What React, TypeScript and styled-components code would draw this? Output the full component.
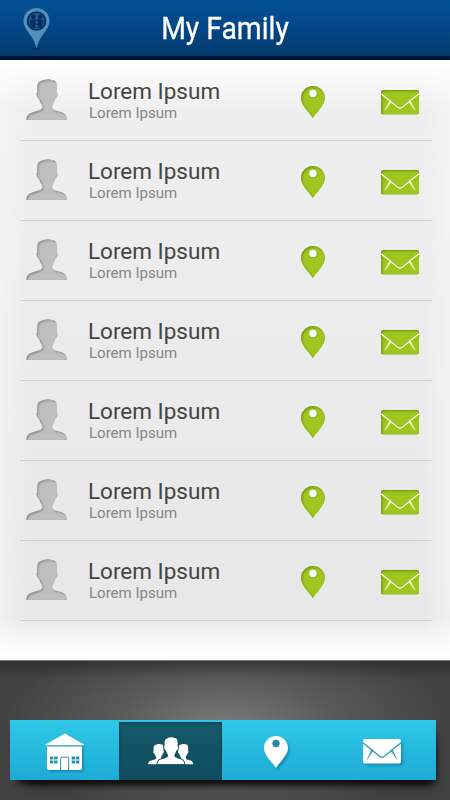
import React from "react";
import styled, { createGlobalStyle, css } from "styled-components";

const GlobalStyle = createGlobalStyle`
  *, *::before, *::after { box-sizing: border-box; }
  body { margin: 0; font-family: Roboto, "Noto Sans", sans-serif; }
`;

const Screen = styled.div`
  width: 450px;
  height: 800px;
  display: flex;
  flex-direction: column;
  overflow: hidden;
  background: #444;
`;

const Header = styled.header`
  height: 60px;
  flex: none;
  display: grid;
  grid-template-columns: 72px 306px 72px;
  border-bottom: 4px solid #001532;
  background: linear-gradient(#045095, #034888 45%, #063a70);
`;

const LogoSlot = styled.div`
  display: flex;
  justify-content: center;
  padding-top: 7px;
`;

const Title = styled.h1`
  margin: 0;
  font-size: 32px;
  line-height: 56px;
  font-weight: 400;
  color: #fff;
  text-align: center;
  white-space: nowrap;
  -webkit-text-stroke: 0.3px #fff;
  transform: scaleX(0.885);
`;

const List = styled.main`
  height: 600px;
  flex: none;
  padding: 0 18px 0 20px;
  background:
    linear-gradient(#fff, rgba(255, 255, 255, 0) 50px, rgba(255, 255, 255, 0) 556px, #fff 594px),
    linear-gradient(90deg, rgba(255, 255, 255, 0.35), rgba(255, 255, 255, 0) 30px, rgba(255, 255, 255, 0) 420px, rgba(255, 255, 255, 0.35)),
    linear-gradient(#efefef, #e7e7e7);
`;

const Row = styled.section`
  height: 80px;
  display: grid;
  grid-template-columns: 68px 193px 100px 1fr;
  align-items: start;
  &:not(:first-child) { border-top: 1px solid #cecece; }
  &:first-child { height: 80px; padding-top: 1px; }
  &:last-child { height: 81px; border-bottom: 1px solid #cecece; }
`;

const Avatar = styled.div`
  padding: 18px 0 0 6px;
`;

const Names = styled.div`
  padding-top: 16px;
`;

const Name = styled.div`
  font-size: 22.5px;
  line-height: 28px;
  color: #444;
  white-space: nowrap;
`;

const Detail = styled.div`
  font-size: 15px;
  line-height: 18px;
  color: #858585;
  padding-left: 1px;
  margin-top: -1px;
`;

const Action = styled.div<{ $top: number; $left?: number }>`
  padding-top: ${(p) => p.$top}px;
  padding-left: ${(p) => p.$left ?? 0}px;
`;

const Footer = styled.footer`
  height: 140px;
  flex: none;
  padding: 59px 14px 0 10px;
  border-top: 1px solid #777;
  background:
    linear-gradient(rgba(20, 20, 20, 0.4), rgba(20, 20, 20, 0) 18px),
    radial-gradient(ellipse 225px 95px at 50% 64px, #7a7a7a, #5a5a5a 48%, #424242 100%);
`;

const Tabs = styled.nav`
  width: 426px;
  height: 60px;
  display: grid;
  grid-template-columns: 109px 103px 107px 107px;
  background: linear-gradient(#2fc8e7, #1dabd6);
  box-shadow: 6px 13px 8px -9px #0a0a0a, 3px 7px 7px -4px #111;
`;

const Tab = styled.div<{ $active?: boolean }>`
  display: flex;
  align-items: center;
  justify-content: center;
  filter: drop-shadow(2px 2px 1px rgba(5, 75, 110, 0.35));
  ${(p) =>
    p.$active &&
    css`
      filter: none;
      margin-top: 2px;
      background: linear-gradient(#14596a, #0e4d60);
      box-shadow: inset 0 1px 2px #093a49, inset 1px 0 1px #0b4656, inset -1px 0 1px #0b4656;
    `}
`;

const Icon = styled.svg<{ $y?: number; $x?: number }>`
  display: block;
  overflow: visible;
  margin-top: ${(p) => p.$y ?? 0}px;
  margin-left: ${(p) => p.$x ?? 0}px;
`;

const PERSON =
  "M.3 41C.3 35.8 3.4 33.9 8 32.9C14 31.5 16.6 30.2 16.6 27.8C16.4 25.8 13.9 24 13.2 19.9C10.6 19.2 9.7 14 11.4 13.2C10.8 7.4 11 3.2 14.5 2.2C17.5.4 21.5-.3 24.7.5L25 1.2L28.8 1.6C31.6 4.5 31.1 9 30.8 13.2C32.5 14.2 31.7 19 29.3 19.9C28.6 23.4 26.3 25 26.1 27.8C26.1 30.4 28.3 31.6 33 32.5C38.2 33.6 41 36 41 41Z";
const PIN =
  "M12 0C5.3 0 0 5.2 0 11.8C0 16.6 3 20.8 6.2 24.8C8.5 27.7 10.4 29.8 11.8 32C13.5 29.3 15.8 27.1 17.9 24.4C21 20.4 24 16.5 24 11.8C24 5.2 18.7 0 12 0Z";

/* Inner shadow along the top-left edge, shared by the recessed list icons. */
const Recess = () => (
  <svg width="0" height="0" aria-hidden="true" display="block">
    <defs>
      <filter id="recess" x="-10%" y="-10%" width="120%" height="120%" colorInterpolationFilters="sRGB">
        <feOffset in="SourceAlpha" dx="0.8" dy="1" />
        <feGaussianBlur stdDeviation="1" result="moved" />
        <feComposite in="SourceAlpha" in2="moved" operator="arithmetic" k1="-1" k2="1" result="edge" />
        <feFlood floodColor="#000" floodOpacity="0.3" />
        <feComposite in2="edge" operator="in" result="shade" />
        <feMerge>
          <feMergeNode in="SourceGraphic" />
          <feMergeNode in="shade" />
        </feMerge>
      </filter>
    </defs>
  </svg>
);

const PersonIcon = () => (
  <Icon width="42" height="42" viewBox="0 0 42 42">
    <path d={PERSON} fill="#bfbfbf" filter="url(#recess)" />
  </Icon>
);

const PinIcon = ({ light = false }: { light?: boolean }) => (
  <Icon width="24" height="32" viewBox="0 0 24 32" $y={light ? 3 : 0}>
    <path d={PIN} fill={light ? "#fff" : "#9dc71e"} filter={light ? undefined : "url(#recess)"} />
    {!light && <circle cx="12.4" cy="8.2" r="4" fill="#6f921a" opacity=".6" />}
    <circle cx="12" cy="7.5" r="3.7" fill={light ? "#288ba9" : "#fff"} />
  </Icon>
);

const MailIcon = ({ light = false }: { light?: boolean }) => {
  const crease = light ? "#319bb9" : "#f7ffe9";
  return (
    <Icon width="38" height="25" viewBox="0 0 38 25" $y={light ? 3 : -0.5} $x={light ? -2 : 0}>
      <rect width="38" height="24.5" rx="2" fill={light ? "#fff" : "#9dc71e"} filter={light ? undefined : "url(#recess)"} />
      {!light && (
        <path d="M0 4.7L16.5 18.2Q19 20 21.5 18.2L38 4.7" fill="none" stroke="#668811" strokeOpacity=".45" strokeWidth="1.5" />
      )}
      <path d="M0 3.7L16.5 17.3Q19 19.1 21.5 17.3L38 3.7" fill="none" stroke={crease} strokeWidth="1.4" />
      <path d="M8.8 10.2L10.3 11.4L4 20.5ZM29.2 10.2L27.7 11.4L34 20.5Z" fill={crease} stroke={crease} strokeWidth=".4" />
    </Icon>
  );
};

const HouseIcon = () => (
  <Icon width="39" height="38" viewBox="0 0 39 38" $y={4} $x={0}>
    <path d="M20 .5L39 11.5V12.3H.5V11.5Z" fill="#fff" />
    <path d="M2 13.6H37V35.2Q37 37 35.2 37H3.8Q2 37 2 35.2Z" fill="#fff" />
    <path
      d="M5 23.4h3.4v3.2H5zM9.2 23.4h3.4v3.2H9.2zM5 27.4h3.4v3.2H5zM9.2 27.4h3.4v3.2H9.2zM26.7 23.4h3.4v3.2h-3.4zM30.9 23.4h3.4v3.2h-3.4zM26.7 27.4h3.4v3.2h-3.4zM30.9 27.4h3.4v3.2h-3.4z"
      fill="#258eaf"
    />
    <path d="M15.7 37V25.3Q15.7 24.2 16.8 24.2H22.6Q23.7 24.2 23.7 25.3V37" fill="none" stroke="#258eaf" strokeWidth="1" />
  </Icon>
);

const GroupIcon = () => (
  <Icon width="46" height="28" viewBox="0 0 46 28" $y={0}>
    <g fill="#fff">
      <path transform="translate(0 6.8) scale(.5)" d={PERSON} />
      <path transform="translate(24.6 6.8) scale(.5)" d={PERSON} />
      <path transform="translate(9.2 .2) scale(.66)" d={PERSON} stroke="#10515f" strokeWidth="2.6" paintOrder="stroke" />
    </g>
    <path d="M8 27.9h30" stroke="#0f5062" strokeWidth="1.2" />
  </Icon>
);

const LogoIcon = () => (
  <Icon width="27" height="43" viewBox="0 0 27 43">
    <ellipse cx="13.5" cy="41.5" rx="4" ry="1.3" fill="#02254e" opacity=".6" />
    <path
      d="M13.5 1C6.2 1 .5 6.6 .5 13.8C.5 19.5 4.1 23.5 7.5 28.2C10.5 32.5 12.6 37 13.5 41.5C14.4 37 16.5 32.5 19.5 28.2C22.9 23.5 26.5 19.5 26.5 13.8C26.5 6.6 20.8 1 13.5 1Z"
      fill="#5090b9"
    />
    <circle cx="13.5" cy="14" r="9.8" fill="#022e62" />
    <circle cx="13.5" cy="14" r="8" fill="#1d5a8d" />
    <g fill="#052f61">
      <circle cx="10.2" cy="9.8" r="2.2" />
      <circle cx="17.1" cy="9.8" r="2.2" />
      <path d="M6.8 13.5Q10.3 11 13.5 13.2Q17 11 20.2 13.5L19.6 18L18.2 20.8H8.8L7.5 18Z" />
    </g>
    <g fill="#2c6c9e">
      <circle cx="13.6" cy="15.4" r="1.2" />
      <path d="M12.6 17.8h2v2.6h-2z" />
    </g>
  </Icon>
);

const people = Array.from({ length: 7 }, (_, id) => ({ id, name: "Lorem Ipsum", detail: "Lorem Ipsum" }));

export default function App() {
  return (
    <Screen>
      <GlobalStyle />
      <Header>
        <LogoSlot>
          <LogoIcon />
        </LogoSlot>
        <Title>My Family</Title>
      </Header>
      <List>
        {people.map((p) => (
          <Row key={p.id}>
            <Avatar>
              <PersonIcon />
            </Avatar>
            <Names>
              <Name>{p.name}</Name>
              <Detail>{p.detail}</Detail>
            </Names>
            <Action $top={25} $left={20}>
              <PinIcon />
            </Action>
            <Action $top={29}>
              <MailIcon />
            </Action>
          </Row>
        ))}
      </List>
      <Footer>
        <Tabs>
          <Tab>
            <HouseIcon />
          </Tab>
          <Tab $active>
            <GroupIcon />
          </Tab>
          <Tab>
            <PinIcon light />
          </Tab>
          <Tab>
            <MailIcon light />
          </Tab>
        </Tabs>
      </Footer>
      <Recess />
    </Screen>
  );
}
